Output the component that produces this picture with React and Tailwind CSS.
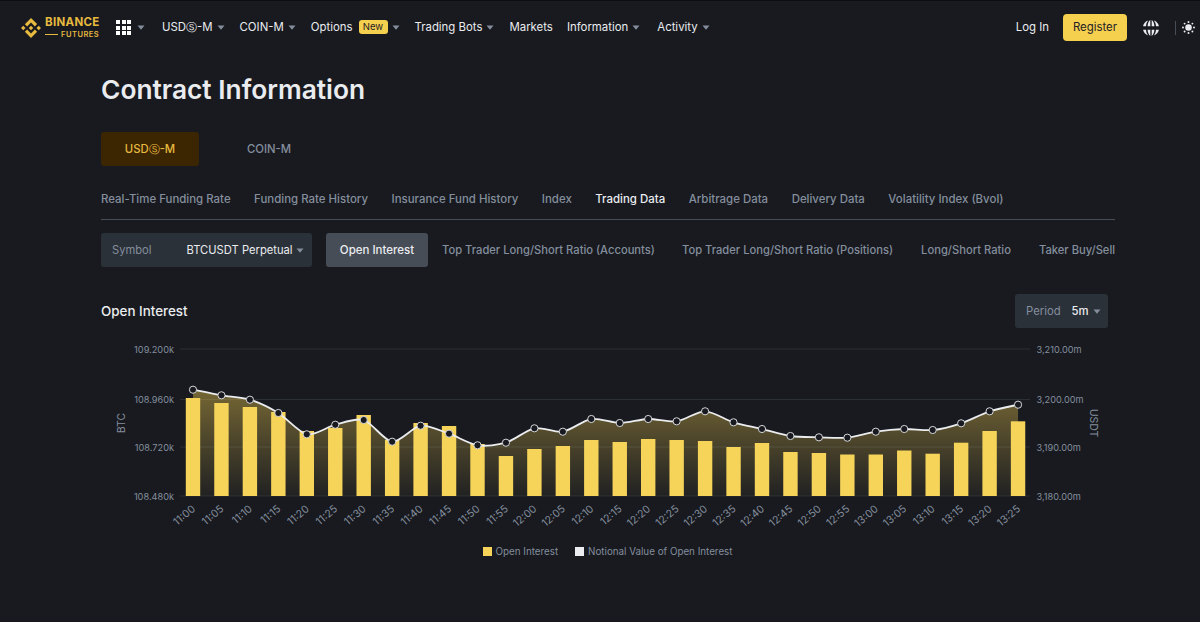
import React from 'react';
import { SiBinance } from 'react-icons/si';

const BAR_TOPS = [398, 403, 407, 412, 431, 428, 415, 440, 423, 426, 444, 456, 449, 446, 440, 442, 439, 440, 441, 447, 443, 452, 453, 454.5, 454.5, 450.5, 453.7, 442.7, 431, 421.3];
const LINE_YS = [389.7, 395.3, 399.7, 413, 434.3, 424.7, 420, 441.7, 425.7, 433.7, 445.3, 442.7, 428.3, 431.7, 419, 423, 419, 421.3, 411.3, 422.3, 429, 436, 437.3, 437.7, 431.7, 429, 430, 423.3, 411.3, 404.7];
const TIMES = ['11:00', '11:05', '11:10', '11:15', '11:20', '11:25', '11:30', '11:35', '11:40', '11:45', '11:50', '11:55', '12:00', '12:05', '12:10', '12:15', '12:20', '12:25', '12:30', '12:35', '12:40', '12:45', '12:50', '12:55', '13:00', '13:05', '13:10', '13:15', '13:20', '13:25'];

// chart svg starts at x=100, y=340 in page coordinates
const X0 = 93;
const STEP = 28.45;
const Y_OFF = 340;
const BASE = 156;
const pts = LINE_YS.map((y, i) => [X0 + i * STEP, y - Y_OFF]);

const smoothPath = (p) => {
    let d = `M${p[0][0]} ${p[0][1]}`;
    for (let i = 0; i < p.length - 1; i++) {
        const a = p[Math.max(i - 1, 0)];
        const b = p[i];
        const c = p[i + 1];
        const e = p[Math.min(i + 2, p.length - 1)];
        const k = 0.14;
        d += ` C${b[0] + (c[0] - a[0]) * k} ${b[1] + (c[1] - a[1]) * k} ${c[0] - (e[0] - b[0]) * k} ${c[1] - (e[1] - b[1]) * k} ${c[0]} ${c[1]}`;
    }
    return d;
};

const linePath = smoothPath(pts);
const areaPath = `${linePath} L${pts[pts.length - 1][0]} ${BASE} L${pts[0][0]} ${BASE} Z`;

const Caret = ({ className = 'ml-[4px]' }) => (
    <svg width="8" height="5" viewBox="0 0 8 5" className={className}>
        <path d="M0.5 0.5h7L4 4.8z" fill="#848e9c" />
    </svg>
);

const NavItem = ({ children, caret = true, className = '' }) => (
    <div className={`flex items-center ${className}`}>
        <span>{children}</span>
        {caret && <Caret />}
    </div>
);

const Circled = () => (
    <span className="font-['DejaVu_Sans'] text-[10.5px] leading-none">Ⓢ</span>
);

const GridIcon = () => (
    <div className="grid grid-cols-3 gap-[1.5px] w-[15px] h-[15px]">
        {Array.from({ length: 9 }).map((_, i) => (
            <div key={i} className="bg-white" />
        ))}
    </div>
);

const GlobeIcon = () => (
    <svg width="16" height="16" viewBox="0 0 16 16">
        <path fill="#eaecef" d="M7.3 0.1v6.2H4.6C4.7 3.8 5.6 1.2 7.3 0.1zM8.7 0.1c1.7 1.1 2.6 3.7 2.7 6.2H8.7zM5.2 0.6C3.9 2 3.1 4.1 3 6.3H0.1C0.5 3.7 2.5 1.4 5.2 0.6zM10.8 0.6c2.7 0.8 4.7 3.1 5.1 5.7H13C12.9 4.1 12.1 2 10.8 0.6zM0.1 9.7H3c0.1 2.2 0.9 4.3 2.2 5.7C2.5 14.6 0.5 12.3 0.1 9.7zM4.6 9.7h2.7v6.2C5.6 14.8 4.7 12.2 4.6 9.7zM8.7 9.7h2.7c-0.1 2.5-1 5.1-2.7 6.2zM13 9.7h2.9c-0.4 2.6-2.4 4.9-5.1 5.7 1.3-1.4 2.1-3.5 2.2-5.7z" />
    </svg>
);

const SunIcon = () => (
    <svg width="13" height="13" viewBox="0 0 16 16" fill="#eaecef">
        <circle cx="8" cy="8" r="4" />
        <circle cx="8" cy="1.2" r="1.2" />
        <circle cx="8" cy="14.8" r="1.2" />
        <circle cx="1.2" cy="8" r="1.2" />
        <circle cx="14.8" cy="8" r="1.2" />
        <circle cx="3.2" cy="3.2" r="1.2" />
        <circle cx="12.8" cy="3.2" r="1.2" />
        <circle cx="3.2" cy="12.8" r="1.2" />
        <circle cx="12.8" cy="12.8" r="1.2" />
    </svg>
);

const Logo = () => (
    <div className="flex items-center w-[80px]">
        <SiBinance className="text-[#e6b93f] w-[20px] h-[20px] shrink-0" />
        <div className="ml-[4px] flex flex-col items-end text-[#e6b93f] font-bold leading-none">
            <span className="text-[11.5px] tracking-[0.3px]">BINANCE</span>
            <div className="flex items-center mt-[2px] w-full">
                <div className="h-[1px] bg-[#e6b93f] w-[13px] mr-[3px]" />
                <span className="text-[7.5px] tracking-[0.5px] font-semibold">FUTURES</span>
            </div>
        </div>
    </div>
);

const Header = () => (
    <header className="h-[54px] flex items-center pl-[21px] pr-[5px] text-[11.4px] text-[#eaecef] border-t border-[#0b0e11]">
        <Logo />
        <div className="flex items-center ml-[15px]">
            <GridIcon />
            <Caret className="ml-[6px]" />
        </div>
        <NavItem className="ml-[17px]">USD<Circled />-M</NavItem>
        <NavItem className="ml-[15px]">COIN-M</NavItem>
        <div className="flex items-center ml-[15px]">
            <span>Options</span>
            <span className="ml-[6px] w-[29px] text-center bg-[#f5d04f] text-[#1e2026] text-[9.5px] leading-[14px] rounded-[3px]">New</span>
            <Caret />
        </div>
        <NavItem className="ml-[15px]">Trading Bots</NavItem>
        <NavItem className="ml-[15px]" caret={false}>Markets</NavItem>
        <NavItem className="ml-[14px]">Information</NavItem>
        <NavItem className="ml-[17px]">Activity</NavItem>
        <div className="ml-auto flex items-center">
            <span>Log In</span>
            <button className="ml-[14px] w-[64px] h-[27px] bg-[#f5d04f] text-[#1e2026] text-[11.4px] rounded-[4px]">Register</button>
            <div className="ml-[16px]"><GlobeIcon /></div>
            <div className="ml-[16px] w-[1px] h-[14px] bg-[#474d57]" />
            <div className="ml-[6px]"><SunIcon /></div>
        </div>
    </header>
);

const Chart = () => (
    <svg width="1040" height="210" viewBox="0 0 1040 210" className="block">
        <defs>
            <linearGradient id="area" x1="0" y1="0" x2="0" y2="1">
                <stop offset="0" stopColor="#f5d04f" stopOpacity="0.42" />
                <stop offset="1" stopColor="#f5d04f" stopOpacity="0.04" />
            </linearGradient>
        </defs>
        {[9, 59.5, 107, 156].map((y) => (
            <line key={y} x1="80" x2="930" y1={y} y2={y} stroke="#2b2f36" strokeWidth="1" />
        ))}
        <path d={areaPath} fill="url(#area)" />
        {BAR_TOPS.map((top, i) => (
            <rect key={i} x={X0 + i * STEP - 7.2} y={top - Y_OFF} width="14.4" height={BASE - (top - Y_OFF)} fill="#f6d45a" />
        ))}
        <path d={linePath} fill="none" stroke="#eaecef" strokeWidth="1.8" />
        {pts.map(([x, y], i) => (
            <circle key={i} cx={x} cy={y} r="3.6" fill="#181a20" stroke="#d5d7da" strokeWidth="1" />
        ))}
        <g fontFamily="Inter, sans-serif" fontSize="9.2" fill="#848e9c">
            {[['109.200k', 13], ['108.960k', 62.5], ['108.720k', 111], ['108.480k', 160]].map(([t, y]) => (
                <text key={t} x="74" y={y} textAnchor="end">{t}</text>
            ))}
            {[['3,210.00m', 13], ['3,200.00m', 62.5], ['3,190.00m', 111], ['3,180.00m', 160]].map(([t, y]) => (
                <text key={t} x="936.5" y={y}>{t}</text>
            ))}
            <text transform="translate(25 83) rotate(-90)" textAnchor="middle" fontSize="10.5">BTC</text>
            <text transform="translate(990 83) rotate(90)" textAnchor="middle" fontSize="10.5">USDT</text>
            {TIMES.map((t, i) => (
                <text key={t} transform={`translate(${X0 + i * STEP + 3} 170) rotate(-40)`} textAnchor="end" fontSize="10.5">{t}</text>
            ))}
        </g>
    </svg>
);

const App = () => (
    <div className="w-[1200px] h-[622px] overflow-hidden bg-[#181a20] font-['Inter',sans-serif]">
        <Header />
        <main className="ml-[101px] w-[1014px]">
            <h1 className="mt-[18px] text-[26.3px] leading-[36px] font-semibold text-[#eaecef]">Contract Information</h1>
            <div className="mt-[24px] flex items-center text-[11.3px] font-medium">
                <div className="w-[98px] h-[34px] flex items-center justify-center rounded-[3px] bg-[#3c2601] text-[#e6b93f]">USD<Circled />-M</div>
                <div className="ml-[48px] text-[#848e9c]">COIN-M</div>
            </div>
            <nav className="mt-[24px] h-[30px] flex items-start gap-[23.5px] border-b border-[#474d57] text-[11.45px] leading-[18px] font-medium text-[#848e9c]">
                <span>Real-Time Funding Rate</span>
                <span>Funding Rate History</span>
                <span>Insurance Fund History</span>
                <span>Index</span>
                <span className="text-[#eaecef]">Trading Data</span>
                <span>Arbitrage Data</span>
                <span>Delivery Data</span>
                <span>Volatility Index (Bvol)</span>
            </nav>
            <div className="mt-[13px] flex items-center overflow-hidden text-[11.2px] font-medium text-[#848e9c] whitespace-nowrap">
                <div className="w-[211px] h-[34px] shrink-0 flex items-center pl-[11px] rounded-[3px] bg-[#2b3139]">
                    <span className="font-normal">Symbol</span>
                    <span className="ml-[35px] text-[#eaecef] font-normal">BTCUSDT Perpetual</span>
                    <Caret className="ml-[3px]" />
                </div>
                <div className="ml-[14px] w-[102px] h-[34px] shrink-0 flex items-center justify-center rounded-[3px] bg-[#474d57] text-[#eaecef] text-[11.5px] leading-[18px]">Open Interest</div>
                <span className="ml-[14px]">Top Trader Long/Short Ratio (Accounts)</span>
                <span className="ml-[27px]">Top Trader Long/Short Ratio (Positions)</span>
                <span className="ml-[28px]">Long/Short Ratio</span>
                <span className="ml-[28px]">Taker Buy/Sell Volume</span>
            </div>
            <div className="mt-[27px] flex items-center justify-between pr-[7px]">
                <h2 className="text-[13.4px] font-medium text-[#eaecef]">Open Interest</h2>
                <div className="w-[93px] h-[34px] flex items-center pl-[11px] rounded-[3px] bg-[#2b3139] text-[11.3px]">
                    <span className="text-[#848e9c]">Period</span>
                    <span className="ml-[11px] text-[#eaecef] font-medium">5m</span>
                    <Caret className="ml-[4px]" />
                </div>
            </div>
        </main>
        <div className="ml-[100px] mt-[12px]">
            <Chart />
        </div>
        <div className="mt-[-6px] flex items-center justify-center ml-[15px] text-[9.8px] leading-[15px] text-[#848e9c]">
            <span className="w-[9px] h-[9px] bg-[#f6d45a] mr-[4px]" />
            <span>Open Interest</span>
            <span className="w-[9px] h-[9px] bg-[#eaecef] ml-[17px] mr-[4px]" />
            <span>Notional Value of Open Interest</span>
        </div>
    </div>
);

export default App;
